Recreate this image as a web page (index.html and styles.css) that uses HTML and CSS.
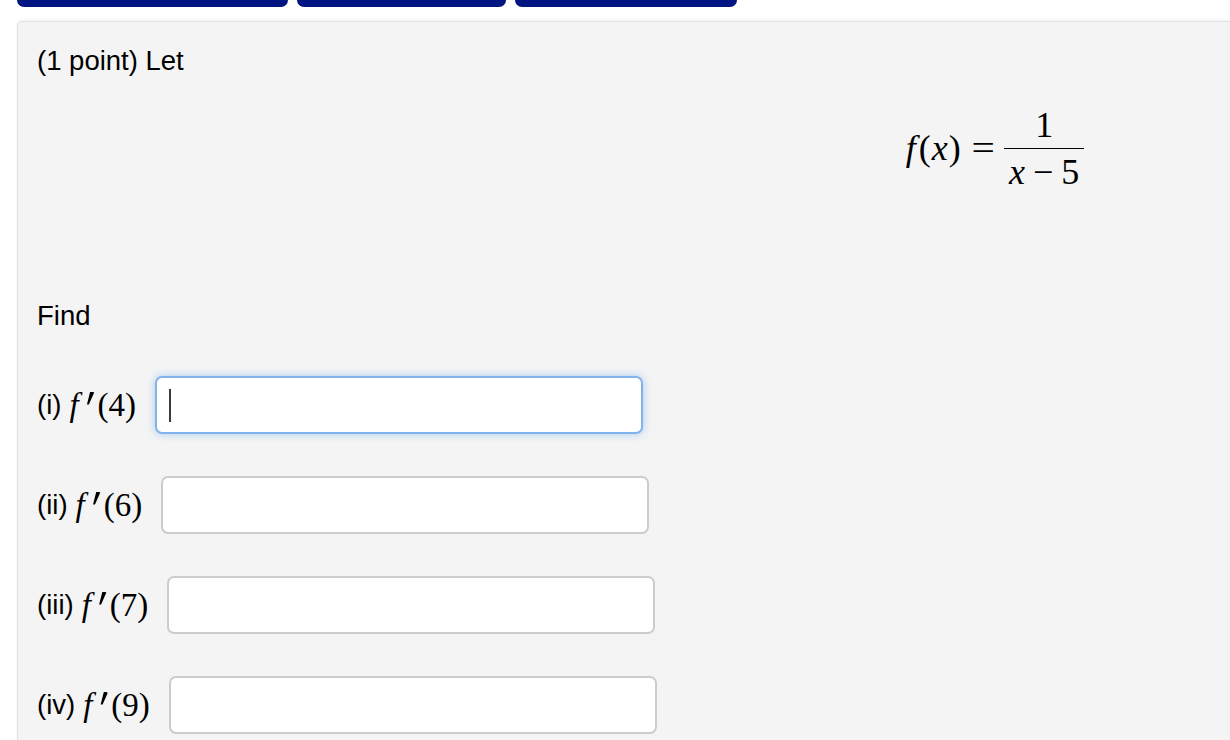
FILE: index.html
```html
<!DOCTYPE html>
<html>
<head>
<meta charset="utf-8">
<link rel="stylesheet" href="styles.css">
</head>
<body>
<div class="page">
  <div class="nav">
    <span class="btn b1"></span>
    <span class="btn b2"></span>
    <span class="btn b3"></span>
  </div>
  <div class="panel">
    <p class="intro">(1 point) Let</p>
    <div class="display">
      <span class="math">
        <span class="mi fi">f</span><span class="mo">(</span><span class="mi xi">x</span><span class="mo">)</span><span class="rel">=</span>
        <span class="frac">
          <span class="num">1</span>
          <span class="den"><span class="mi">x</span><span class="bin">−</span>5</span>
        </span>
      </span>
    </div>
    <p class="find">Find</p>
    <div class="row">
      <span class="lbl">(i)</span><span class="m"><span class="mi">f</span><span class="prime" aria-label="′"></span>(4)</span>
      <div class="field focused"><input class="answer" type="text"></div>
    </div>
    <div class="row">
      <span class="lbl">(ii)</span><span class="m"><span class="mi">f</span><span class="prime" aria-label="′"></span>(6)</span>
      <div class="field"><input class="answer" type="text"></div>
    </div>
    <div class="row">
      <span class="lbl">(iii)</span><span class="m"><span class="mi">f</span><span class="prime" aria-label="′"></span>(7)</span>
      <div class="field"><input class="answer" type="text"></div>
    </div>
    <div class="row">
      <span class="lbl">(iv)</span><span class="m"><span class="mi">f</span><span class="prime" aria-label="′"></span>(9)</span>
      <div class="field"><input class="answer" type="text"></div>
    </div>
  </div>
</div>
</body>
</html>
```
FILE: styles.css
```css
html, body {
  margin: 0;
  padding: 0;
  background: #ffffff;
  overflow: hidden;
}
.page {
  width: 1230px;
  height: 740px;
  overflow: hidden;
  font-family: "Liberation Sans", Arial, sans-serif;
  font-size: 27.5px;
  color: #000;
}
.nav {
  display: flex;
  gap: 9px;
  margin-left: 17px;
}
.btn {
  display: block;
  height: 7px;
  background: #001581;
  border-radius: 0 0 7px 7px;
}
.b1 { width: 271px; }
.b2 { width: 209px; }
.b3 { width: 222px; }
.panel {
  margin-top: 14px;
  margin-left: 17px;
  width: 1955px;
  min-height: 900px;
  box-sizing: border-box;
  background: #f4f4f4;
  border: 1px solid #e2e2e2;
  border-radius: 5px;
  box-shadow: 0 -1px 3px rgba(0,0,0,0.06);
  padding: 20px 19px;
}
.intro, .find {
  margin: 0;
  line-height: 38px;
}
.display {
  display: flex;
  justify-content: center;
  margin: 26px 0 0;
  height: 191px;
  font-family: "Liberation Serif", "Times New Roman", serif;
  font-size: 36px;
}
.math {
  display: flex;
  align-items: center;
  height: 84px;
  line-height: 36px;
}
.mi { font-style: italic; }
.fi { margin: 0 3px 0 2px; }
.xi { margin: 0 1px 0 1px; }
.rel { margin: 0 10px 0 12px; transform: scaleX(1.15); }
.frac {
  display: flex;
  flex-direction: column;
  align-items: center;
  padding: 0 1px;
}
.num {
  padding: 0 5px 5px;
}
.den {
  border-top: 1.5px solid #000;
  padding: 5px 5px 0;
}
.bin { margin: 0 8px; }
.find {
  margin-bottom: 41px;
}
.row {
  display: flex;
  align-items: center;
  height: 58px;
  margin-bottom: 42px;
}
.m {
  font-family: "Liberation Serif", "Times New Roman", serif;
  font-size: 33px;
  margin-left: 8px;
}
.prime {
  display: inline-block;
  width: 8px;
  height: 13px;
  margin: 0 3px 0 8px;
  vertical-align: 11px;
  background: #000;
  clip-path: polygon(45% 0, 100% 0, 28% 100%, 4% 100%);
  border-radius: 2px 2px 0 0;
}
.field {
  position: relative;
  margin-left: 19px;
}
.answer {
  display: block;
  box-sizing: border-box;
  width: 488px;
  height: 58px;
  margin: 0;
  padding: 0 12px;
  background: #fff;
  border: 2px solid #cccccc;
  border-radius: 7px;
  outline: none;
  font-size: 24px;
}
.focused .answer {
  border-color: #80b3ec;
  box-shadow: 0 0 8px rgba(102, 170, 236, 0.55);
}
.focused::after {
  content: "";
  position: absolute;
  left: 14px;
  top: 13px;
  width: 2px;
  height: 33px;
  background: #3a3a3a;
}
```
